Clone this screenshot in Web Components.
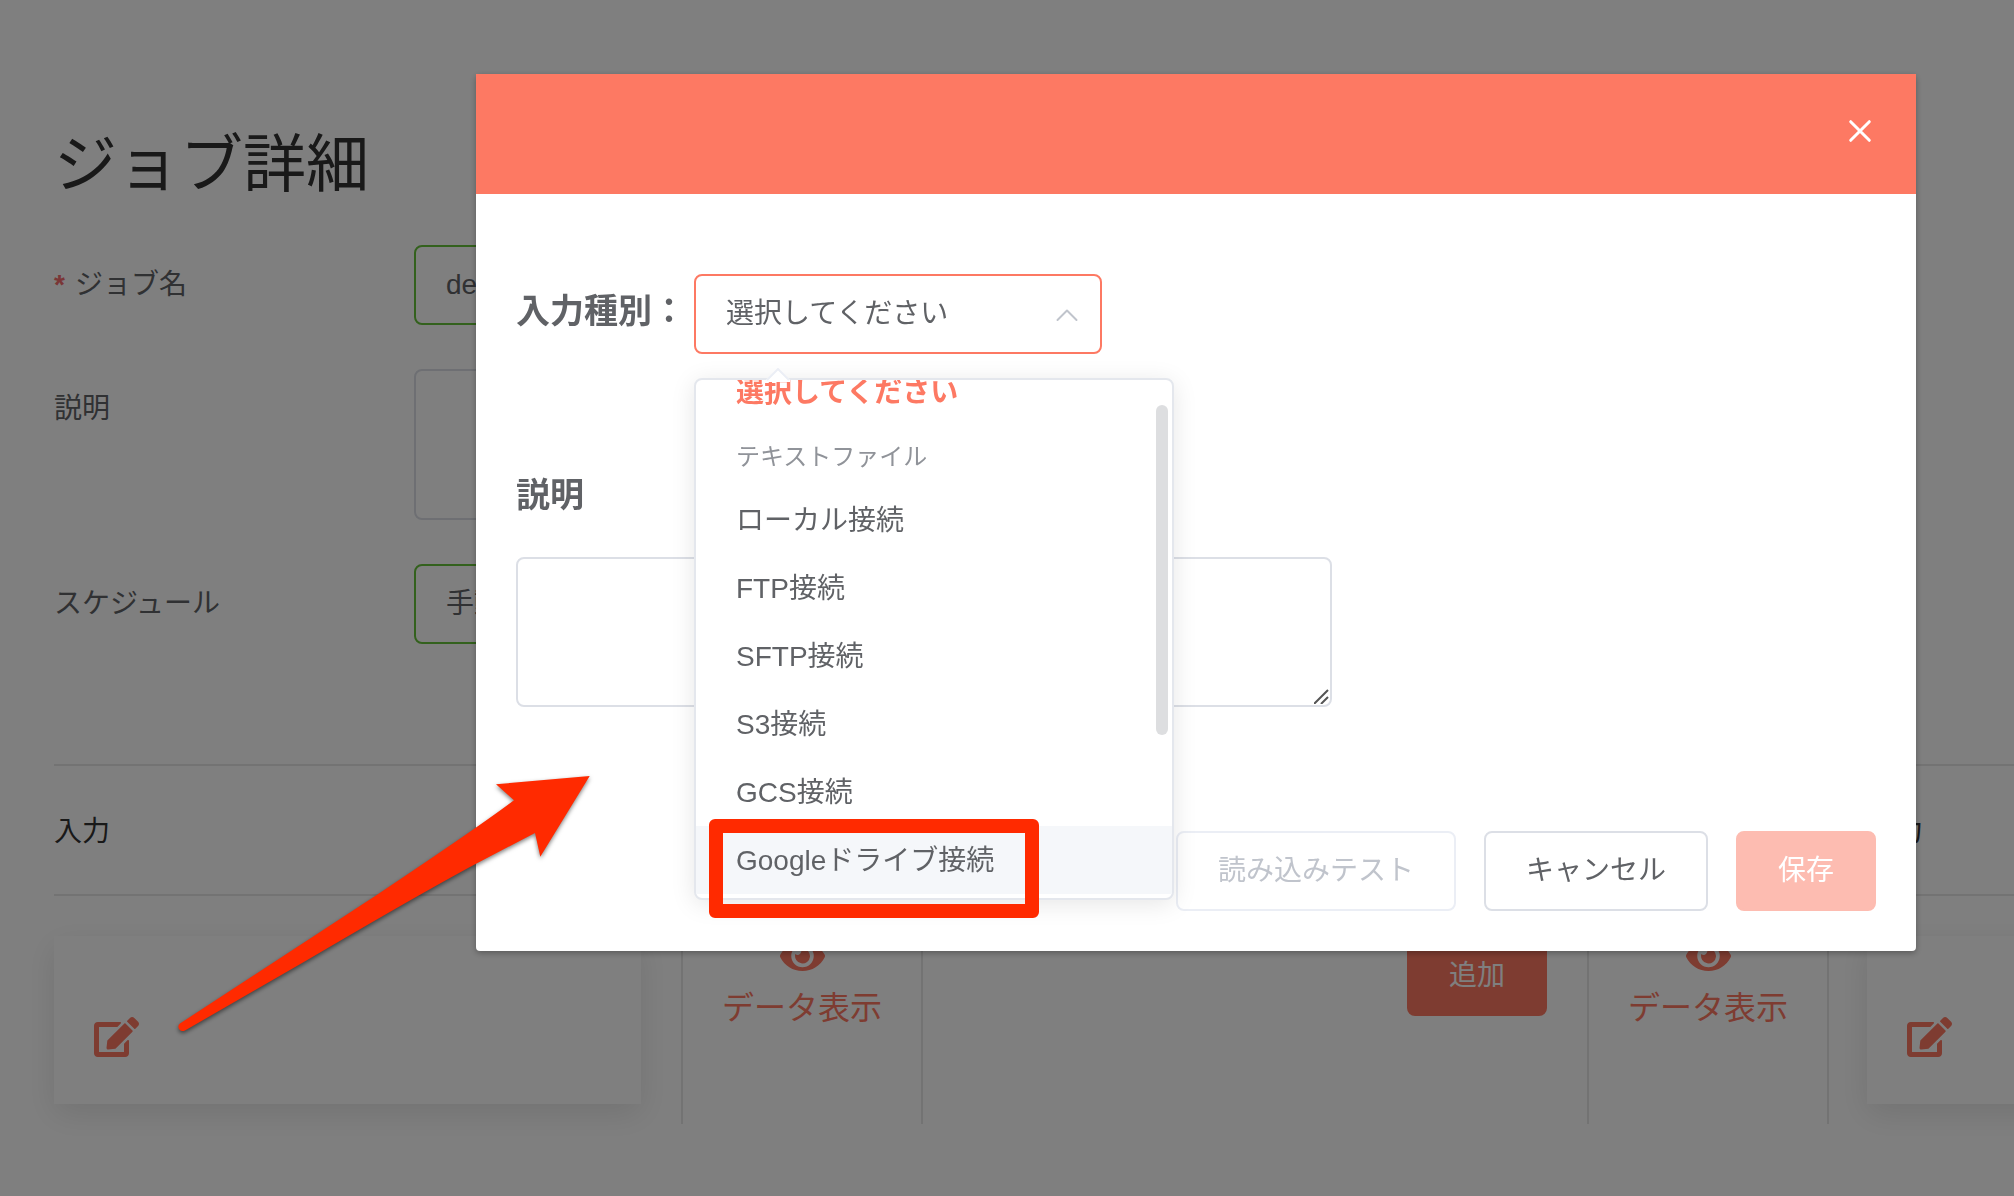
<!DOCTYPE html>
<html lang="ja">
<head>
  <meta charset="UTF-8">
  <meta name="viewport" content="width=device-width, initial-scale=1.0">
  <title>ジョブ詳細</title>
  <style>
    :root {
      --primary: #fd7963;
      --primary-light: #fdbcb1;
      --text: #606266;
      --text-dark: #333;
      --border: #dcdfe6;
      --border-light: #e4e7ed;
      --placeholder: #c0c4cc;
      --success: #67c23a;
    }

    body {
      margin: 0;
      overflow: hidden;
      background-color: #fff;
      color: var(--text);
      font-family: "Liberation Sans", "Noto Sans CJK JP", sans-serif;
      font-size: 28px;
      line-height: 40px;
    }
  </style>
</head>
<body>
  <job-page>
    <job-field label="ジョブ名" type="text" value="demo" state="success" required></job-field>
    <job-field label="説明" type="textarea"></job-field>
    <job-field label="スケジュール" type="select" value="手動" state="success"></job-field>
    <job-flow slot="flow"></job-flow>
  </job-page>

  <modal-dialog>
    <input-type-select></input-type-select>
    <note-field></note-field>
    <app-button slot="footer" disabled>読み込みテスト</app-button>
    <app-button slot="footer">キャンセル</app-button>
    <app-button slot="footer" type="primary" disabled>保存</app-button>
  </modal-dialog>

  <pointer-arrow></pointer-arrow>

  <script>
    class JobPage extends HTMLElement {
      constructor() {
        super();
        this.attachShadow({ mode: "open" });
        this.shadowRoot.innerHTML = `
          <style>
            :host {
              display: block;
              min-height: 100vh;
              box-sizing: border-box;
              padding: 116px 0 0 54px;
              overflow: hidden;
            }

            h1 {
              margin: 0 0 33px;
              color: var(--text-dark);
              font-size: 63px;
              font-weight: 400;
              line-height: 96px;
            }

            form {
              display: flex;
              flex-direction: column;
              gap: 44px;
              margin-bottom: 120px;
            }
          </style>
          <main>
            <h1>ジョブ詳細</h1>
            <form><slot></slot></form>
            <slot name="flow"></slot>
          </main>
        `;
      }
    }
    customElements.define("job-page", JobPage);

    class JobField extends HTMLElement {
      constructor() {
        super();
        this.attachShadow({ mode: "open" });
      }

      connectedCallback() {
        const label = this.getAttribute("label");
        const value = this.getAttribute("value") || "";
        const controls = {
          text: `<input id="control" type="text" value="${value}">`,
          textarea: `<textarea id="control"></textarea>`,
          select: `<select id="control"><option>${value}</option></select>`,
        };

        this.shadowRoot.innerHTML = `
          <style>
            :host {
              display: flex;
              align-items: flex-start;
            }

            label {
              flex: 0 0 360px;
              line-height: 80px;
            }

            :host([required]) label::before {
              content: "*";
              margin-right: 10px;
              color: #f56c6c;
              font-weight: 700;
            }

            input,
            select,
            textarea {
              flex: 1;
              max-width: 1200px;
              height: 80px;
              box-sizing: border-box;
              margin: 0;
              padding: 0 30px;
              appearance: none;
              border: 2px solid var(--border);
              border-radius: 8px;
              outline: none;
              background-color: #fff;
              color: var(--text);
              font: inherit;
            }

            textarea {
              height: 151px;
              resize: none;
            }

            :host([state="success"]) input,
            :host([state="success"]) select {
              border-color: var(--success);
            }
          </style>
          <label for="control">${label}</label>
          ${controls[this.getAttribute("type")]}
        `;
      }
    }
    customElements.define("job-field", JobField);

    class AppIcon extends HTMLElement {
      static paths = {
        edit: "M402.6 83.2l90.2 90.2c3.8 3.8 3.8 10 0 13.8L274.4 405.6l-92.8 10.3c-12.4 1.4-22.9-9.1-21.5-21.5l10.3-92.8L388.8 83.2c3.8-3.8 10-3.8 13.8 0zm162-22.9l-48.8-48.8c-15.2-15.2-39.9-15.2-55.2 0l-35.4 35.4c-3.8 3.8-3.8 10 0 13.8l90.2 90.2c3.8 3.8 10 3.8 13.8 0l35.4-35.4c15.2-15.3 15.2-40 0-55.2zM384 346.2V448H64V128h229.8c3.2 0 6.2-1.3 8.5-3.5l40-40c7.6-7.6 2.2-20.5-8.5-20.5H48C21.5 64 0 85.5 0 112v352c0 26.5 21.5 48 48 48h352c26.5 0 48-21.5 48-48V306.2c0-10.7-12.9-16-20.5-8.5l-40 40c-2.2 2.3-3.5 5.3-3.5 8.5z",
        eye: "M572.52 241.4C518.29 135.59 410.93 64 288 64S57.68 135.64 3.48 241.41a32.35 32.35 0 0 0 0 29.19C57.71 376.41 165.07 448 288 448s230.32-71.64 284.52-177.41a32.35 32.35 0 0 0 0-29.19zM288 400a144 144 0 1 1 144-144 143.93 143.93 0 0 1-144 144zm0-240a95.31 95.31 0 0 0-25.31 3.79 47.85 47.85 0 0 1-66.9 66.9A95.78 95.78 0 1 0 288 160z",
      };

      constructor() {
        super();
        this.attachShadow({ mode: "open" });
      }

      connectedCallback() {
        this.shadowRoot.innerHTML = `
          <style>
            :host {
              display: block;
              width: 45px;
              height: 40px;
            }

            svg {
              display: block;
            }
          </style>
          <svg width="45" height="40" viewBox="0 0 576 512" fill="currentColor" aria-hidden="true">
            <path d="${AppIcon.paths[this.getAttribute("name")]}"/>
          </svg>
        `;
      }
    }
    customElements.define("app-icon", AppIcon);

    class AppButton extends HTMLElement {
      constructor() {
        super();
        this.attachShadow({ mode: "open" });
      }

      connectedCallback() {
        const disabled = this.hasAttribute("disabled") ? "disabled" : "";
        this.shadowRoot.innerHTML = `
          <style>
            :host {
              display: block;
            }

            button {
              display: block;
              height: 80px;
              padding: 0 40px;
              border: 2px solid var(--border);
              border-radius: 8px;
              background-color: #fff;
              color: var(--text);
              font: inherit;
              white-space: nowrap;
              cursor: pointer;
            }

            button:disabled {
              border-color: #ebeef5;
              color: var(--placeholder);
              cursor: not-allowed;
            }

            :host([type="primary"]) button {
              border-color: var(--primary);
              background-color: var(--primary);
              color: #fff;
            }

            :host([type="primary"]) button:disabled {
              border-color: var(--primary-light);
              background-color: var(--primary-light);
            }
          </style>
          <button type="button" ${disabled}><slot></slot></button>
        `;
      }
    }
    customElements.define("app-button", AppButton);

    class JobFlow extends HTMLElement {
      constructor() {
        super();
        this.attachShadow({ mode: "open" });
        this.shadowRoot.innerHTML = `
          <style>
            :host {
              display: block;
            }

            .row {
              display: grid;
              grid-template-columns: 627fr 240px 666fr 240px 187fr;
            }

            .head {
              padding-top: 4px;
              border-top: 2px solid #e6e6e6;
              border-bottom: 2px solid #e6e6e6;
              color: var(--text-dark);
              line-height: 124px;
            }

            .head .output {
              grid-column: 5;
              padding-left: 40px;
            }

            .cell {
              min-width: 0;
              min-height: 168px;
              padding: 40px 0 20px;
            }

            .cell + .cell {
              border-left: 2px solid #e6e6e6;
            }

            .cell.input {
              padding-right: 40px;
            }

            .cell.output {
              padding-left: 38px;
            }

            .card {
              display: flex;
              align-items: flex-end;
              height: 168px;
              box-sizing: border-box;
              padding: 0 40px 47px;
              background-color: #fff;
              box-shadow: 0 10px 30px rgba(0, 0, 0, 0.1);
            }

            /* the last card runs on past the window edge */
            .output .card {
              margin-right: -80px;
            }

            .preview {
              display: flex;
              flex-direction: column;
              align-items: center;
              gap: 8px;
              color: var(--primary);
              font-size: 32px;
              line-height: 48px;
              text-decoration: none;
            }

            .edit {
              color: var(--primary);
            }

            .convert {
              display: flex;
              justify-content: flex-end;
              align-items: flex-start;
              padding-right: 40px;
            }
          </style>
          <div class="row head">
            <div>入力</div>
            <div class="output">出力</div>
          </div>
          <div class="row">
            <div class="cell input">
              <div class="card"><a class="edit" href="#input" aria-label="編集"><app-icon name="edit"></app-icon></a></div>
            </div>
            <div class="cell">
              <a class="preview" href="#input-data"><app-icon name="eye"></app-icon>データ表示</a>
            </div>
            <div class="cell convert">
              <app-button type="primary">追加</app-button>
            </div>
            <div class="cell">
              <a class="preview" href="#output-data"><app-icon name="eye"></app-icon>データ表示</a>
            </div>
            <div class="cell output">
              <div class="card"><a class="edit" href="#output" aria-label="編集"><app-icon name="edit"></app-icon></a></div>
            </div>
          </div>
        `;
      }
    }
    customElements.define("job-flow", JobFlow);

    class ModalDialog extends HTMLElement {
      constructor() {
        super();
        this.attachShadow({ mode: "open" });
        this.shadowRoot.innerHTML = `
          <style>
            :host {
              position: fixed;
              inset: 0;
              display: block;
              box-sizing: border-box;
              padding: 74px 98px 0 476px;
              background-color: rgba(0, 0, 0, 0.5);
            }

            .dialog {
              border-radius: 4px;
              background-color: #fff;
              box-shadow: 0 2px 6px rgba(0, 0, 0, 0.3);
            }

            header {
              display: flex;
              justify-content: flex-end;
              align-items: flex-start;
              height: 80px;
              padding: 40px 40px 0;
              background-color: var(--primary);
            }

            .close {
              padding: 0;
              border: 0;
              background: none;
              cursor: pointer;
            }

            .close svg {
              display: block;
            }

            .body {
              padding: 80px 40px 0;
            }

            footer {
              display: flex;
              justify-content: flex-end;
              gap: 28px;
              padding: 124px 40px 40px;
            }
          </style>
          <div class="dialog" role="dialog" aria-modal="true">
            <header>
              <button class="close" type="button" aria-label="閉じる">
                <svg width="32" height="32" viewBox="0 0 32 32" fill="none" stroke="#fff" stroke-width="3" stroke-linecap="round">
                  <path d="M6.7 7.7l18.6 18.6M25.3 7.7L6.7 26.3"/>
                </svg>
              </button>
            </header>
            <div class="body"><slot></slot></div>
            <footer><slot name="footer"></slot></footer>
          </div>
        `;
      }
    }
    customElements.define("modal-dialog", ModalDialog);

    class InputTypeSelect extends HTMLElement {
      constructor() {
        super();
        this.attachShadow({ mode: "open" });
        this.shadowRoot.innerHTML = `
          <style>
            :host {
              display: flex;
              align-items: center;
              gap: 8px;
            }

            label {
              padding-bottom: 6px;
              font-size: 34px;
              font-weight: 700;
              white-space: nowrap;
            }

            .select {
              position: relative;
              width: 408px;
            }

            select {
              display: block;
              width: 100%;
              height: 80px;
              box-sizing: border-box;
              margin: 0;
              padding: 0 60px 0 30px;
              appearance: none;
              border: 2px solid var(--primary);
              border-radius: 8px;
              outline: none;
              background-color: #fff;
              color: var(--text);
              font: inherit;
            }

            .caret {
              position: absolute;
              top: 34px;
              right: 24px;
              pointer-events: none;
            }

            option-menu {
              position: absolute;
              z-index: 1;
              top: 104px;
              left: 0;
            }
          </style>
          <label for="type">入力種別：</label>
          <div class="select">
            <select id="type">
              <option>選択してください</option>
            </select>
            <svg class="caret" width="22" height="14" viewBox="0 0 22 14" fill="none" stroke="#c0c4cc" stroke-width="2" stroke-linecap="round" stroke-linejoin="round">
              <path d="M1.5 12L11 2.5l9.5 9.5"/>
            </svg>
            <option-menu></option-menu>
          </div>
        `;
      }
    }
    customElements.define("input-type-select", InputTypeSelect);

    class OptionMenu extends HTMLElement {
      constructor() {
        super();
        this.attachShadow({ mode: "open" });
        this.shadowRoot.innerHTML = `
          <style>
            :host {
              display: block;
              width: 480px;
              box-sizing: border-box;
              padding-bottom: 4px;
              border: 2px solid var(--border-light);
              border-radius: 8px;
              background-color: #fff;
              box-shadow: 0 4px 24px rgba(0, 0, 0, 0.1);
            }

            /* scrolled to its lower end: the first row is cut by the top edge */
            ul {
              display: flex;
              flex-direction: column;
              justify-content: flex-end;
              height: 514px;
              margin: 0;
              padding: 0;
              overflow: hidden;
              list-style: none;
            }

            li {
              flex: none;
              padding: 2px 40px 0;
              line-height: 66px;
              white-space: nowrap;
              cursor: pointer;
            }

            .selected {
              color: var(--primary);
              font-weight: 700;
            }

            .group {
              color: #909399;
              font-size: 24px;
              line-height: 58px;
            }

            .hover {
              background-color: #f5f7fa;
            }

            .tip {
              position: absolute;
              top: -12px;
              left: 70px;
            }

            .thumb {
              position: absolute;
              top: 25px;
              right: 4px;
              width: 12px;
              height: 330px;
              border-radius: 6px;
              background-color: #dddee0;
            }

            .mark {
              position: absolute;
              left: 13px;
              bottom: -20px;
              width: 330px;
              height: 99px;
              box-sizing: border-box;
              border: 14px solid #ff2a00;
              border-radius: 6px;
              pointer-events: none;
            }
          </style>
          <ul role="listbox" aria-label="入力種別">
            <li class="selected" role="option" aria-selected="true">選択してください</li>
            <li class="group" role="presentation">テキストファイル</li>
            <li role="option">ローカル接続</li>
            <li role="option">FTP接続</li>
            <li role="option">SFTP接続</li>
            <li role="option">S3接続</li>
            <li role="option">GCS接続</li>
            <li class="hover" role="option">Googleドライブ接続</li>
          </ul>
          <svg class="tip" width="24" height="14" viewBox="0 0 24 14">
            <path d="M0 14V12L12 0l12 12v2z" fill="#fff"/>
            <path d="M1 12L12 1l11 11" fill="none" stroke="#ebeef5" stroke-width="2"/>
          </svg>
          <div class="thumb"></div>
          <div class="mark"></div>
        `;
      }
    }
    customElements.define("option-menu", OptionMenu);

    class NoteField extends HTMLElement {
      constructor() {
        super();
        this.attachShadow({ mode: "open" });
        this.shadowRoot.innerHTML = `
          <style>
            :host {
              display: flex;
              flex-direction: column;
              gap: 36px;
              margin-top: 115px;
            }

            label {
              font-size: 34px;
              font-weight: 700;
              line-height: 52px;
            }

            .box {
              position: relative;
              width: 60%;
            }

            textarea {
              display: block;
              width: 100%;
              height: 150px;
              box-sizing: border-box;
              padding: 10px 30px;
              border: 2px solid var(--border);
              border-radius: 8px;
              outline: none;
              resize: none;
              color: var(--text);
              font: inherit;
            }

            .grip {
              position: absolute;
              right: 3px;
              bottom: 3px;
            }
          </style>
          <label for="note">説明</label>
          <div class="box">
            <textarea id="note"></textarea>
            <svg class="grip" width="15" height="15" viewBox="0 0 15 15" stroke="#555" stroke-width="2">
              <path d="M0 15L14 1M7 15l7-7"/>
            </svg>
          </div>
        `;
      }
    }
    customElements.define("note-field", NoteField);

    class PointerArrow extends HTMLElement {
      constructor() {
        super();
        this.attachShadow({ mode: "open" });
        this.shadowRoot.innerHTML = `
          <style>
            :host {
              position: fixed;
              top: 766px;
              left: 170px;
              display: block;
              pointer-events: none;
            }

            svg {
              display: block;
              filter: drop-shadow(0 2px 2px rgba(0, 0, 0, 0.5));
            }
          </style>
          <svg width="440" height="280" viewBox="170 766 440 280" fill="#ff2a00" aria-hidden="true">
            <path d="M589.7 776L496 784.3l18 16Q480 826 376.700 895L180 1023.500C176 1027 180 1033 185 1030.500L303 962.500Q416 896 476 863.700L535 833l5.300 23.700z"/>
          </svg>
        `;
      }
    }
    customElements.define("pointer-arrow", PointerArrow);
  </script>
</body>
</html>
